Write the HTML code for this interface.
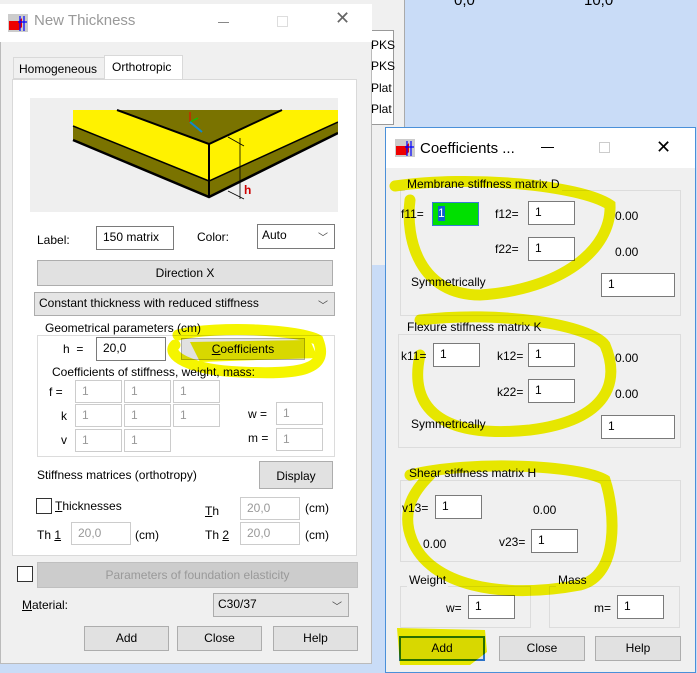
<!DOCTYPE html>
<html><head><meta charset="utf-8"><style>
*{box-sizing:border-box;margin:0;padding:0}
body{width:697px;height:672px;overflow:hidden;background:#c9dcf7;font-family:"Liberation Sans",sans-serif;font-size:12px;color:#000;position:relative}
.a{position:absolute}
.t{position:absolute;white-space:nowrap;line-height:14px}
.in{position:absolute;background:#fff;border:1px solid #7a7a7a;padding:3px 0 0 6px;line-height:14px}
.dis{border-color:#ccc;color:#999;background:#fff}
.btn{position:absolute;background:#e1e1e1;border:1px solid #adadad;text-align:center;line-height:22px}
.grp{position:absolute;border:1px solid #dcdcdc}
.leg{position:absolute;background:#f0f0f0;padding:0 2px;line-height:14px;white-space:nowrap}
.sel{position:absolute;background:#fff;border:1px solid #7a7a7a;padding:3px 0 0 4px}
.chev{position:absolute;right:6px;top:4px;font-size:10px;color:#444}
u{text-decoration:underline}
</style></head><body>
<div class="a" style="left:0;top:0;width:405px;height:265px;background:#f0f0f0;border-right:1px solid #aaa"></div>
<div class="a" style="left:370px;top:30px;width:24px;height:95px;background:#fff;border:1px solid #999"></div>
<div class="t" style="left:371px;top:38px">PKS</div><div class="t" style="left:371px;top:59px">PKS</div>
<div class="t" style="left:371px;top:81px">Plat</div><div class="t" style="left:371px;top:102px">Plat</div>
<div class="t" style="left:454px;top:-6px;font-size:15px">0,0</div>
<div class="t" style="left:584px;top:-6px;font-size:15px">10,0</div>

<div class="a" style="left:0;top:4px;width:372px;height:660px;background:#f0f0f0;border:1px solid #bbb"></div>
<div class="a" style="left:0;top:4px;width:372px;height:38px;background:#fff"></div>
<svg class="a" style="left:8px;top:14px" width="20" height="18"><rect x="0" y="0" width="20" height="18" fill="#ccc"/><path d="M1 7h10l3-3v9l-3 3H1z" fill="#e00"/><path d="M12 2v15M16 2v15M10 8h9" stroke="#00f" stroke-width="1.2"/></svg>
<div class="t" style="left:34px;top:14px;font-size:15px;color:#999">New Thickness</div>
<div class="a" style="left:218px;top:22px;width:11px;border-top:1px solid #888"></div>
<div class="a" style="left:277px;top:16px;width:11px;height:11px;border:1px solid #ddd"></div>
<div class="t" style="left:335px;top:11px;font-size:18px;color:#666">✕</div>
<div class="a" style="left:13px;top:57px;width:92px;height:22px;background:#f0f0f0;border:1px solid #d9d9d9"></div>
<div class="t" style="left:19px;top:62px">Homogeneous</div>
<div class="a" style="left:104px;top:55px;width:79px;height:25px;background:#fff;border:1px solid #d9d9d9;border-bottom:none"></div>
<div class="t" style="left:112px;top:60px">Orthotropic</div>
<div class="a" style="left:12px;top:79px;width:345px;height:477px;background:#fff;border:1px solid #d9d9d9"></div>
<div class="a" style="left:12px;top:79px;width:92px;height:1px;background:#d9d9d9"></div>
<div class="a" style="left:183px;top:79px;width:174px;height:1px;background:#d9d9d9"></div>
<svg class="a" style="left:30px;top:98px" width="308" height="114"><rect width="308" height="114" fill="#efefef"/>
<g transform="translate(-30,-98)">
<polygon points="73,110 338,110 338,122 209,181 73,126" fill="#fff200"/>
<polygon points="117,110 282,110 209,144" fill="#7a7300"/>
<polygon points="73,126 209,181 338,122 338,133 209,197 73,140" fill="#7a7300"/>
<path d="M117,110 L209,144 L282,110 M209,144 V197" stroke="#000" stroke-width="2" fill="none"/>
<path d="M73,126 L209,181 L338,122" stroke="#000" stroke-width="1.5" fill="none"/>
<path d="M73,140 L209,197 L338,133" stroke="#000" stroke-width="2.5" fill="none"/>
<path d="M240,138 V199 M228,137 L244,146 M228,191 L244,199" stroke="#000" fill="none" stroke-width="0.8"/>
<text x="244" y="194" font-family="Liberation Sans" font-weight="bold" font-size="12" fill="#c00">h</text>
<path d="M190,112 v10" stroke="#e00"/><path d="M190,122 l8,-4" stroke="#0c0"/><path d="M190,122 l12,10" stroke="#18c" stroke-width="2"/>
</g>
</svg>
<div class="t" style="left:37px;top:233px">Label:</div>
<div class="in" style="left:96px;top:226px;width:78px;height:24px">150 matrix</div>
<div class="t" style="left:197px;top:230px">Color:</div>
<div class="sel" style="left:257px;top:224px;width:78px;height:25px">Auto<span class="chev">﹀</span></div>
<div class="btn" style="left:37px;top:260px;width:296px;height:26px;line-height:24px">Direction X</div>
<div class="sel" style="left:34px;top:292px;width:301px;height:24px;background:#e5e5e5;border-color:#acacac">Constant thickness with reduced stiffness<span class="chev">﹀</span></div>
<div class="grp" style="left:37px;top:335px;width:298px;height:122px"></div>
<div class="leg" style="left:43px;top:321px;background:#fff">Geometrical parameters (cm)</div>
<div class="t" style="left:63px;top:342px">h &nbsp;=</div>
<div class="in" style="left:96px;top:337px;width:70px;height:24px">20,0</div>
<div class="btn" style="left:181px;top:338px;width:124px;height:22px;line-height:20px"><u>C</u>oefficients</div>
<div class="t" style="left:52px;top:365px">Coefficients of stiffness, weight, mass:</div>
<div class="t" style="left:49px;top:385px">f =</div><div class="t" style="left:61px;top:409px">k</div><div class="t" style="left:61px;top:433px">v</div>
<div class="in dis" style="left:75px;top:380px;width:47px;height:23px">1</div><div class="in dis" style="left:124px;top:380px;width:47px;height:23px">1</div><div class="in dis" style="left:173px;top:380px;width:47px;height:23px">1</div>
<div class="in dis" style="left:75px;top:404px;width:47px;height:23px">1</div><div class="in dis" style="left:124px;top:404px;width:47px;height:23px">1</div><div class="in dis" style="left:173px;top:404px;width:47px;height:23px">1</div>
<div class="in dis" style="left:75px;top:429px;width:47px;height:23px">1</div><div class="in dis" style="left:124px;top:429px;width:47px;height:23px">1</div>
<div class="t" style="left:248px;top:407px">w =</div><div class="in dis" style="left:276px;top:402px;width:47px;height:23px">1</div>
<div class="t" style="left:248px;top:431px">m =</div><div class="in dis" style="left:276px;top:428px;width:47px;height:23px">1</div>
<div class="t" style="left:37px;top:468px">Stiffness matrices (orthotropy)</div>
<div class="btn" style="left:259px;top:461px;width:74px;height:28px;line-height:28px">Display</div>
<div class="a" style="left:36px;top:498px;width:16px;height:16px;border:1px solid #333;background:#fff"></div>
<div class="t" style="left:55px;top:499px"><u>T</u>hicknesses</div>
<div class="t" style="left:205px;top:504px"><u>T</u>h</div>
<div class="in dis" style="left:240px;top:497px;width:60px;height:23px">20,0</div><div class="t" style="left:305px;top:501px">(cm)</div>
<div class="t" style="left:37px;top:528px">Th <u>1</u></div>
<div class="in dis" style="left:71px;top:522px;width:60px;height:23px">20,0</div><div class="t" style="left:135px;top:528px">(cm)</div>
<div class="t" style="left:205px;top:528px">Th <u>2</u></div>
<div class="in dis" style="left:240px;top:522px;width:60px;height:23px">20,0</div><div class="t" style="left:305px;top:528px">(cm)</div>
<div class="a" style="left:17px;top:566px;width:16px;height:16px;border:1px solid #333;background:#fff"></div>
<div class="btn" style="left:37px;top:562px;width:321px;height:26px;line-height:24px;background:#ccc;border-color:#bfbfbf;color:#999">Parameters of foundation elasticity</div>
<div class="t" style="left:22px;top:598px"><u>M</u>aterial:</div>
<div class="sel" style="left:213px;top:593px;width:136px;height:24px;background:#e5e5e5;border-color:#acacac">C30/37<span class="chev">﹀</span></div>
<div class="btn" style="left:84px;top:626px;width:85px;height:25px">Add</div>
<div class="btn" style="left:177px;top:626px;width:85px;height:25px">Close</div>
<div class="btn" style="left:273px;top:626px;width:85px;height:25px">Help</div>

<div class="a" style="left:385px;top:127px;width:311px;height:546px;background:#f0f0f0;border:1px solid #4a90d9"></div>
<div class="a" style="left:386px;top:128px;width:309px;height:40px;background:#fff"></div>
<svg class="a" style="left:395px;top:139px" width="20" height="18"><rect width="20" height="18" fill="#ccc"/><path d="M1 7h10l3-3v9l-3 3H1z" fill="#e00"/><path d="M12 2v15M16 2v15M10 8h9" stroke="#00f" stroke-width="1.2"/></svg>
<div class="t" style="left:420px;top:140px;font-size:15px;line-height:18px">Coefficients ...</div>
<div class="a" style="left:541px;top:147px;width:13px;border-top:1px solid #000"></div>
<div class="a" style="left:599px;top:142px;width:11px;height:11px;border:1px solid #ccc"></div>
<div class="t" style="left:656px;top:137px;font-size:18px;line-height:20px">✕</div>
<div class="grp" style="left:400px;top:190px;width:281px;height:126px"></div>
<div class="leg" style="left:405px;top:177px">Membrane stiffness matrix D</div>
<div class="t" style="left:401px;top:207px">f11=</div>
<div class="a" style="left:432px;top:202px;width:47px;height:24px;background:#00e000;border:1px solid #3a7bd5"><span style="position:absolute;left:5px;top:3px;background:#1060d0;color:#fff;line-height:15px">1</span></div>
<div class="t" style="left:495px;top:207px">f12=</div><div class="in" style="left:528px;top:201px;width:47px;height:24px">1</div>
<div class="t" style="left:615px;top:209px">0.00</div>
<div class="t" style="left:495px;top:242px">f22=</div><div class="in" style="left:528px;top:237px;width:47px;height:24px">1</div>
<div class="t" style="left:615px;top:245px">0.00</div>
<div class="t" style="left:411px;top:275px">Symmetrically</div><div class="in" style="left:601px;top:273px;width:74px;height:24px">1</div>

<div class="grp" style="left:398px;top:334px;width:283px;height:114px"></div>
<div class="leg" style="left:405px;top:320px">Flexure stiffness matrix K</div>
<div class="t" style="left:401px;top:349px">k11=</div><div class="in" style="left:433px;top:343px;width:47px;height:24px">1</div>
<div class="t" style="left:497px;top:349px">k12=</div><div class="in" style="left:528px;top:343px;width:47px;height:24px">1</div>
<div class="t" style="left:615px;top:351px">0.00</div>
<div class="t" style="left:497px;top:385px">k22=</div><div class="in" style="left:528px;top:379px;width:47px;height:24px">1</div>
<div class="t" style="left:615px;top:387px">0.00</div>
<div class="t" style="left:411px;top:417px">Symmetrically</div><div class="in" style="left:601px;top:415px;width:74px;height:24px">1</div>

<div class="grp" style="left:400px;top:480px;width:281px;height:82px"></div>
<div class="leg" style="left:407px;top:466px">Shear stiffness matrix H</div>
<div class="t" style="left:402px;top:501px">v13=</div><div class="in" style="left:435px;top:495px;width:47px;height:24px">1</div>
<div class="t" style="left:533px;top:503px">0.00</div>
<div class="t" style="left:423px;top:537px">0.00</div>
<div class="t" style="left:499px;top:535px">v23=</div><div class="in" style="left:531px;top:529px;width:47px;height:24px">1</div>

<div class="grp" style="left:400px;top:586px;width:131px;height:42px"></div>
<div class="leg" style="left:407px;top:573px">Weight</div>
<div class="t" style="left:446px;top:601px">w=</div><div class="in" style="left:468px;top:595px;width:47px;height:24px">1</div>
<div class="grp" style="left:549px;top:586px;width:131px;height:42px"></div>
<div class="leg" style="left:556px;top:573px">Mass</div>
<div class="t" style="left:594px;top:601px">m=</div><div class="in" style="left:617px;top:595px;width:47px;height:24px">1</div>
<div class="btn" style="left:399px;top:636px;width:86px;height:25px;border:2px solid #2a72c8;line-height:21px">Add</div>
<div class="btn" style="left:499px;top:636px;width:86px;height:25px">Close</div>
<div class="btn" style="left:595px;top:636px;width:86px;height:25px">Help</div>

<svg class="a" style="left:0;top:0;mix-blend-mode:multiply" width="697" height="672">
<g fill="none" stroke="#f5f500" stroke-width="11" stroke-linecap="round">
<path d="M395,186 C470,175 580,185 610,205 C612,250 560,290 480,295 C420,295 405,240 410,200"/>
<path d="M420,320 C500,310 590,325 605,345 C620,380 610,420 530,430 C430,440 410,400 420,355"/>
<path d="M410,475 C470,460 580,465 605,480 C615,510 620,575 580,585 C500,600 430,585 412,540 C400,510 415,490 430,475"/>
<path d="M178,335 C220,325 300,330 318,340 C330,370 300,375 240,372 C190,370 165,355 175,345"/>
</g>
<g fill="#f5f500">
<path d="M397,628 L485,630 L487,652 L470,665 L400,665 Z"/>
<path d="M190,342 L310,340 L318,358 L200,362 Z"/>
</g>
</svg>
</body></html>
